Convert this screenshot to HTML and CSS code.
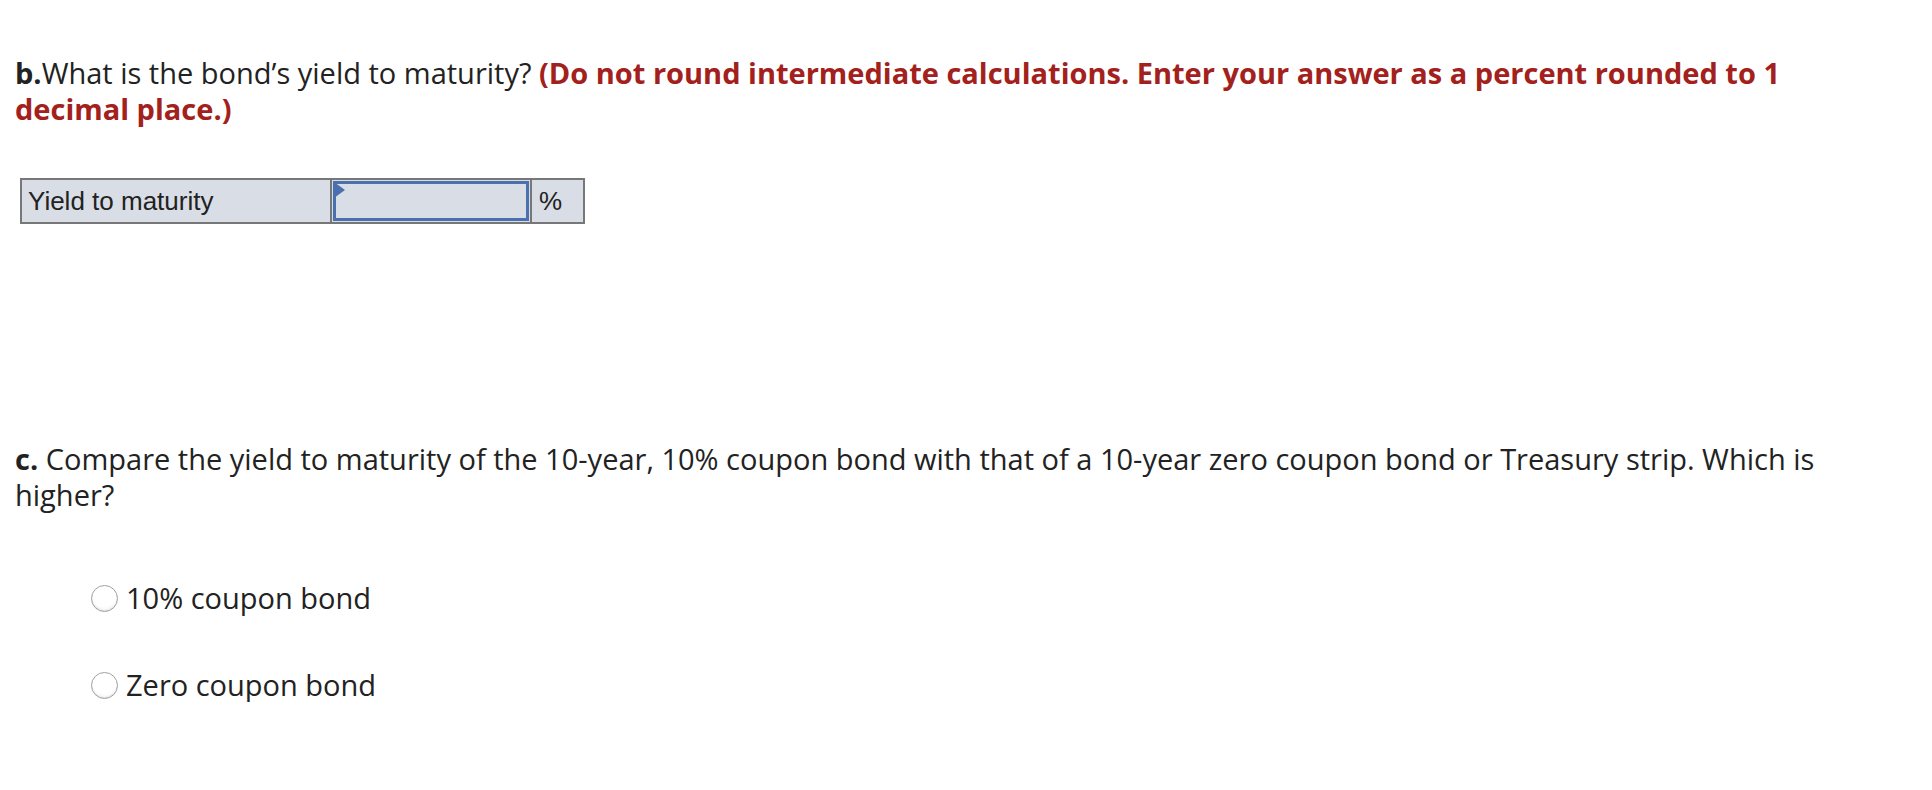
FILE: index.html
```html
<!DOCTYPE html>
<html>
<head>
<meta charset="utf-8">
<link rel="stylesheet" href="styles.css">
</head>
<body>
<div class="page">
  <p class="question q-b"><b>b.</b>What is the bond’s yield to maturity? <span class="hint">(Do not round intermediate calculations. Enter your answer as a percent rounded to 1 decimal place.)</span></p>
  <table class="answer">
    <tr>
      <td class="label">Yield to maturity</td>
      <td class="input-cell"><div class="input-box"><span class="flag"></span></div></td>
      <td class="unit">%</td>
    </tr>
  </table>
  <p class="question q-c"><b>c.</b> Compare the yield to maturity of the 10-year, 10% coupon bond with that of a 10-year zero coupon bond or Treasury strip. Which is higher?</p>
  <div class="options">
    <label class="option"><input type="radio" name="c"><span>10% coupon bond</span></label>
    <label class="option"><input type="radio" name="c"><span>Zero coupon bond</span></label>
  </div>
</div>
</body>
</html>
```

FILE: styles.css
```css
html, body {
  margin: 0;
  padding: 0;
  background: #fff;
}
.page {
  padding: 55px 0 0 15px;
  width: 1875px;
  font-family: "Open Sans", "Liberation Sans", sans-serif;
  font-size: 29px;
  color: #222;
}
.question {
  margin: 0;
  line-height: 36px;
}
.question b {
  font-weight: 700;
}
.hint {
  color: #a3211c;
  font-weight: 700;
}
.answer {
  margin: 51px 0 0 5px;
  border-collapse: collapse;
  border: 2px solid #777;
  background: #d9dde5;
  font-family: "Liberation Sans", Arial, sans-serif;
  font-size: 26px;
  color: #222;
}
.answer td {
  border: 2px solid #777;
  height: 42px;
  padding: 0;
  vertical-align: middle;
}
.label {
  width: 302px;
  padding-left: 6px !important;
}
.input-cell {
  width: 198px;
}
.input-box {
  position: relative;
  margin: 1px;
  height: 40px;
  border: 3px solid #4a71ae;
  box-sizing: border-box;
}
.flag {
  position: absolute;
  left: -2px;
  top: -2px;
  width: 0;
  height: 0;
  border-top: 8px solid transparent;
  border-bottom: 8px solid transparent;
  border-left: 11px solid #4a71ae;
}
.unit {
  width: 44px;
  padding-left: 7px !important;
}
.q-c {
  margin-top: 217px;
}
.options {
  display: flex;
  flex-direction: column;
  gap: 53px;
  margin: 68px 0 0 76px;
}
.option {
  display: flex;
  align-items: center;
  gap: 8px;
  line-height: 34px;
}
.option input {
  appearance: none;
  -webkit-appearance: none;
  margin: 0;
  width: 27px;
  height: 27px;
  border-radius: 50%;
  border: 1px solid #a0a0a0;
  background: radial-gradient(circle at 50% 35%, #ffffff 55%, #ececec 100%);
  box-shadow: inset 0 -1px 1px rgba(0,0,0,0.08);
}
```
